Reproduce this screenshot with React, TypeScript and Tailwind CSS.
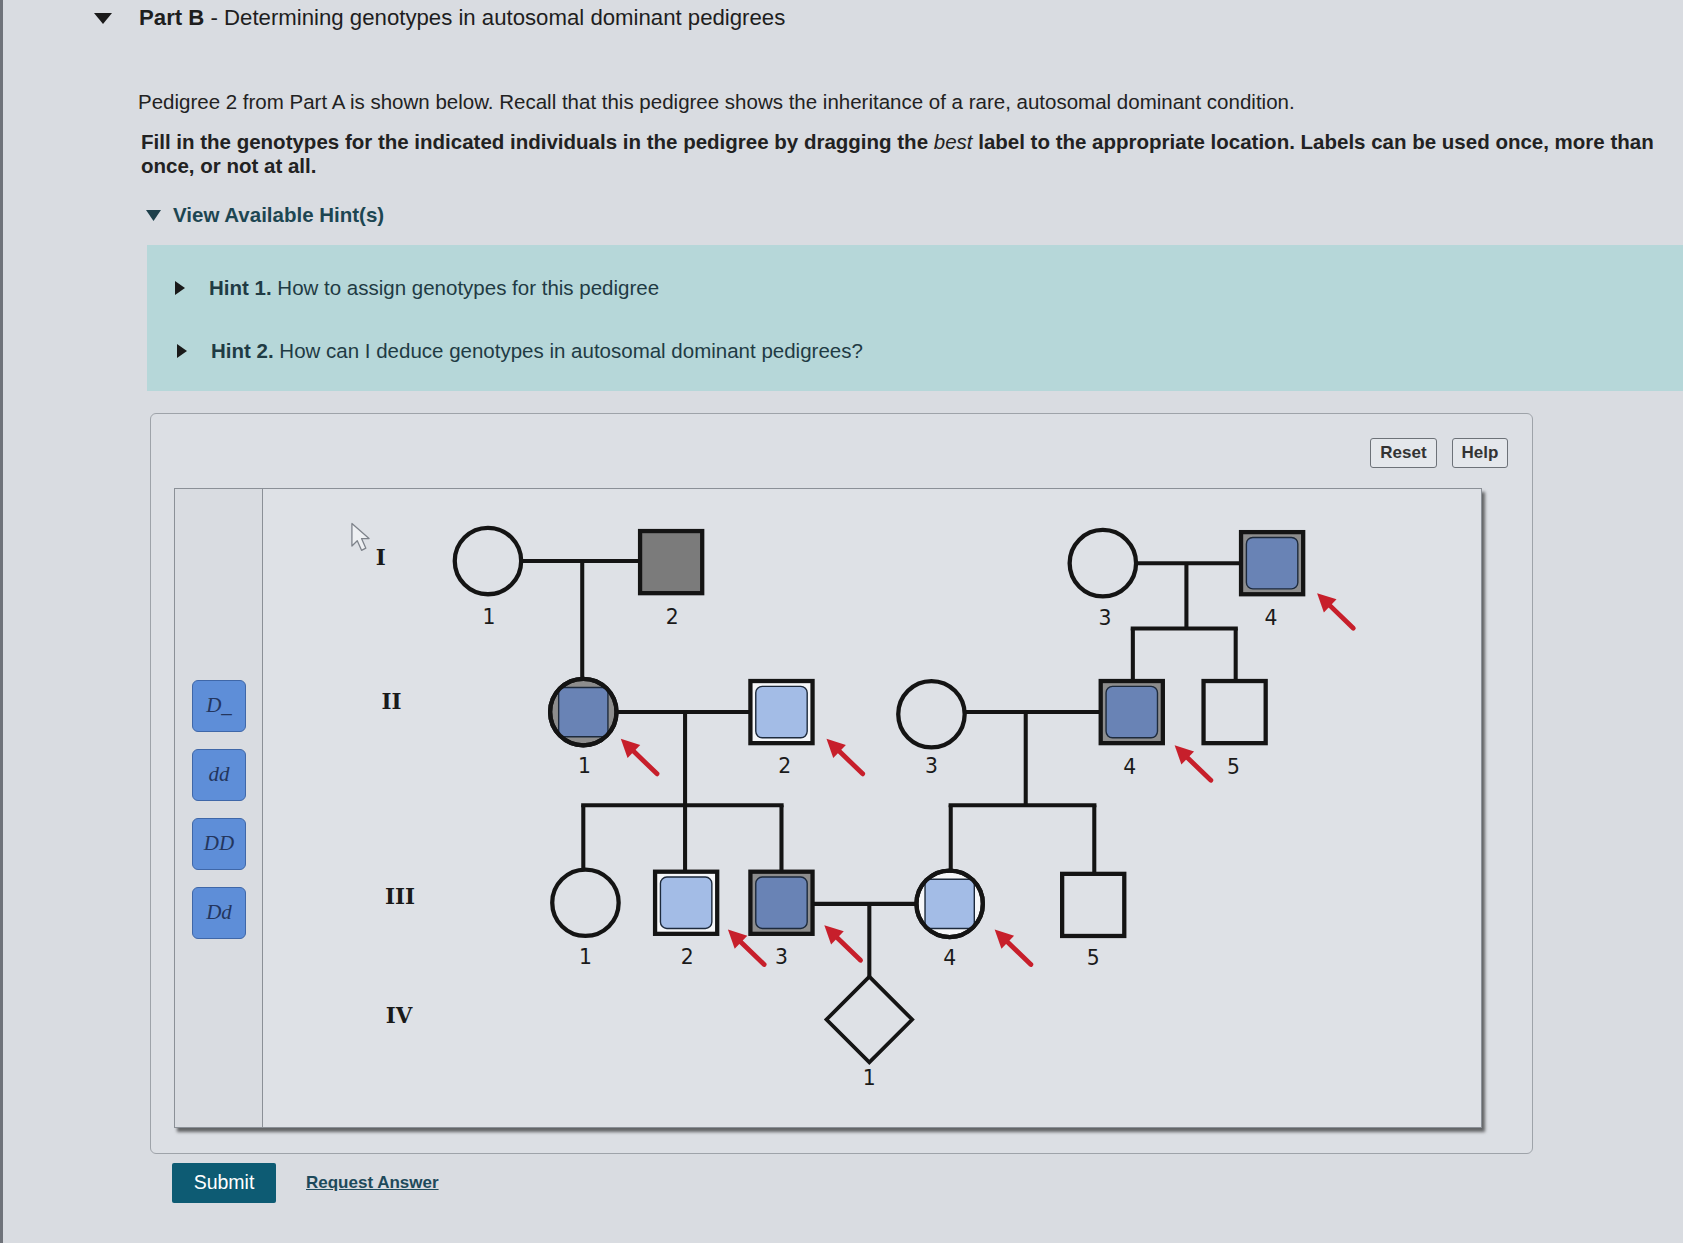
import React from 'react';

const INK = '#141414';
const RED = '#c71f2b';

type SqKind = 'plain' | 'gray' | 'dark' | 'light';

function Sq({ x, y, kind }: { x: number; y: number; kind: SqKind }) {
  const s = 58;
  const fill =
    kind === 'gray' ? '#7b7b7b' : kind === 'dark' ? '#8d8d8d' : kind === 'light' ? '#f6f7f9' : 'none';
  return (
    <g>
      <rect x={x} y={y} width={s} height={s} fill={fill} stroke={INK} strokeWidth={4} />
      {(kind === 'dark' || kind === 'light') && (
        <rect
          x={x + 5}
          y={y + 5}
          width={s - 10}
          height={s - 10}
          rx={6}
          fill={kind === 'dark' ? '#6983b5' : '#a3bce6'}
          stroke="#1d2a3c"
          strokeWidth={1.3}
        />
      )}
    </g>
  );
}

function Circ({ cx, cy, kind, id }: { cx: number; cy: number; kind: 'plain' | 'dark' | 'light'; id: string }) {
  const r = 31;
  const fill = kind === 'dark' ? '#8d8d8d' : kind === 'light' ? '#f6f7f9' : 'none';
  return (
    <g>
      <clipPath id={id}>
        <circle cx={cx} cy={cy} r={r - 1} />
      </clipPath>
      <circle cx={cx} cy={cy} r={r} fill={fill} stroke={INK} strokeWidth={4} />
      {kind !== 'plain' && (
        <rect
          x={cx - 23}
          y={cy - 23}
          width={46}
          height={46}
          rx={5}
          clipPath={`url(#${id})`}
          fill={kind === 'dark' ? '#6983b5' : '#a3bce6'}
          stroke="#1d2a3c"
          strokeWidth={1.3}
        />
      )}
      {kind !== 'plain' && <circle cx={cx} cy={cy} r={r} fill="none" stroke={INK} strokeWidth={4} />}
    </g>
  );
}

// head sits at (x, y), tail runs off to the lower right
function Arrow({ x, y }: { x: number; y: number }) {
  return (
    <g transform={`translate(${x} ${y}) rotate(44)`}>
      <line x1={12} y1={0} x2={47} y2={0} stroke={RED} strokeWidth={4.5} strokeLinecap="round" />
      <polygon points="0,0 17,-8.5 17,8.5" fill={RED} />
    </g>
  );
}

function Num({ x, y, n }: { x: number; y: number; n: string }) {
  return (
    <text
      x={x}
      y={y}
      textAnchor="middle"
      dominantBaseline="central"
      fontFamily="'DejaVu Sans', Verdana, sans-serif"
      fontSize={19}
      fill="#1a1a1a"
    >
      {n}
    </text>
  );
}

function Gen({ x, y, t }: { x: number; y: number; t: string }) {
  return (
    <text
      x={x}
      y={y}
      textAnchor="middle"
      dominantBaseline="central"
      fontFamily="'DejaVu Serif', 'Liberation Serif', serif"
      fontWeight={700}
      fontSize={20}
      fill="#1a1a1a"
    >
      {t}
    </text>
  );
}

function Pedigree() {
  const line = { stroke: INK, strokeWidth: 3.8 };
  return (
    <svg width={1219} height={639} viewBox="244 455 1137 596" className="block">
      {/* mouse pointer */}
      <path
        d="M327 487 L327 508 L332 503 L336 512 L340 510 L336 501 L343 501 Z"
        fill="#eef0f3"
        stroke="#7d828a"
        strokeWidth={1.2}
        strokeLinejoin="round"
      />

      <Gen x={354} y={519} t="I" />
      <Gen x={364} y={653} t="II" />
      <Gen x={372} y={835} t="III" />
      <Gen x={371} y={946} t="IV" />

      {/* generation I lines */}
      <line x1={485} y1={522} x2={596} y2={522} {...line} />
      <line x1={542} y1={522} x2={542} y2={632} {...line} />
      <line x1={1059} y1={524} x2={1157} y2={524} {...line} />
      <line x1={1106} y1={524} x2={1106} y2={585} {...line} />
      <line x1={1054} y1={585} x2={1154} y2={585} {...line} />
      <line x1={1056} y1={585} x2={1056} y2={634} {...line} />
      <line x1={1152} y1={585} x2={1152} y2={634} {...line} />

      {/* generation II lines */}
      <line x1={574} y1={663} x2={699} y2={663} {...line} />
      <line x1={638} y1={663} x2={638} y2={750} {...line} />
      <line x1={541} y1={750} x2={730} y2={750} {...line} />
      <line x1={543} y1={750} x2={543} y2={810} {...line} />
      <line x1={638} y1={750} x2={638} y2={812} {...line} />
      <line x1={728} y1={750} x2={728} y2={812} {...line} />
      <line x1={899} y1={663} x2={1026} y2={663} {...line} />
      <line x1={956} y1={663} x2={956} y2={750} {...line} />
      <line x1={884} y1={750} x2={1022} y2={750} {...line} />
      <line x1={886} y1={750} x2={886} y2={811} {...line} />
      <line x1={1020} y1={750} x2={1020} y2={814} {...line} />

      {/* generation III lines */}
      <line x1={757} y1={842} x2={854} y2={842} {...line} />
      <line x1={810} y1={842} x2={810} y2={910} {...line} />

      {/* generation I */}
      <Circ cx={454} cy={522} kind="plain" id="c11" />
      <Sq x={596} y={494} kind="gray" />
      <Circ cx={1028} cy={524} kind="plain" id="c13" />
      <Sq x={1157} y={495} kind="dark" />

      {/* generation II */}
      <Circ cx={543} cy={663} kind="dark" id="c21" />
      <Sq x={699} y={634} kind="light" />
      <Circ cx={868} cy={665} kind="plain" id="c23" />
      <Sq x={1026} y={634} kind="dark" />
      <Sq x={1122} y={634} kind="plain" />

      {/* generation III */}
      <Circ cx={545} cy={841} kind="plain" id="c31" />
      <Sq x={610} y={812} kind="light" />
      <Sq x={699} y={812} kind="dark" />
      <Circ cx={885} cy={842} kind="light" id="c34" />
      <Sq x={990} y={814} kind="plain" />

      {/* generation IV */}
      <polygon points="810,910 850,950 810,990 770,950" fill="none" stroke={INK} strokeWidth={3.5} />

      <Num x={455} y={574} n="1" />
      <Num x={626} y={574} n="2" />
      <Num x={1030} y={575} n="3" />
      <Num x={1185} y={575} n="4" />
      <Num x={544} y={713} n="1" />
      <Num x={731} y={713} n="2" />
      <Num x={868} y={713} n="3" />
      <Num x={1053} y={714} n="4" />
      <Num x={1150} y={714} n="5" />
      <Num x={545} y={892} n="1" />
      <Num x={640} y={892} n="2" />
      <Num x={728} y={892} n="3" />
      <Num x={885} y={893} n="4" />
      <Num x={1019} y={893} n="5" />
      <Num x={810} y={1005} n="1" />

      <Arrow x={578} y={688} />
      <Arrow x={770} y={688} />
      <Arrow x={1228} y={552} />
      <Arrow x={1095} y={694} />
      <Arrow x={678} y={866} />
      <Arrow x={768} y={862} />
      <Arrow x={927} y={866} />
    </svg>
  );
}

const labels = ['D_', 'dd', 'DD', 'Dd'];

export default function App() {
  return (
    <div className="relative w-[1683px] h-[1243px] overflow-hidden border-l-[3px] border-[#6f737a] bg-[#d9dce1] font-['Liberation_Sans',Arial,sans-serif] text-[#222]">
      {/* Part header */}
      <div className="flex items-center h-[26px] mt-[5px]">
        <svg className="ml-[91px] w-[18px] h-[11px]" viewBox="0 0 18 11">
          <polygon points="0,0 18,0 9,11" fill="#1a1a1a" />
        </svg>
        <h2 className="ml-[27px] text-[22.2px] leading-[26px] text-[#1e1e1e]">
          <span className="font-bold">Part B</span> - Determining genotypes in autosomal dominant pedigrees
        </h2>
      </div>

      <div className="pl-[135px] pr-[10px]">
        <p className="mt-[59px] text-[20.5px] leading-[24px]">
          Pedigree 2 from Part A is shown below. Recall that this pedigree shows the inheritance of a rare, autosomal
          dominant condition.
        </p>
        <p className="mt-[16px] ml-[3px] text-[20.5px] leading-[24px] font-bold">
          Fill in the genotypes for the indicated individuals in the pedigree by dragging the{' '}
          <em className="font-normal">best</em> label to the appropriate location. Labels can be used once, more than
          once, or not at all.
        </p>

        <div className="mt-[25px] flex items-center h-[24px]">
          <svg className="ml-[8px] w-[15px] h-[11px]" viewBox="0 0 15 11">
            <polygon points="0,0 15,0 7.5,11" fill="#1d3f4a" />
          </svg>
          <span className="ml-[12px] text-[20.5px] font-bold text-[#1d4652]">View Available Hint(s)</span>
        </div>

        {/* hints */}
        <div className="mt-[18px] ml-[9px] mr-[-10px] h-[146px] bg-[#b6d7d9] pt-[31px] text-[20.5px] text-[#1f3b44]">
          <div className="flex items-center h-[24px]">
            <svg className="ml-[28px] w-[10px] h-[14px]" viewBox="0 0 10 14">
              <polygon points="0,0 10,7 0,14" fill="#1a1a1a" />
            </svg>
            <span className="ml-[24px]">
              <span className="font-bold">Hint 1.</span> How to assign genotypes for this pedigree
            </span>
          </div>
          <div className="flex items-center h-[24px] mt-[39px]">
            <svg className="ml-[30px] w-[10px] h-[14px]" viewBox="0 0 10 14">
              <polygon points="0,0 10,7 0,14" fill="#1a1a1a" />
            </svg>
            <span className="ml-[24px]">
              <span className="font-bold">Hint 2.</span> How can I deduce genotypes in autosomal dominant pedigrees?
            </span>
          </div>
        </div>

        {/* drag-and-drop panel */}
        <div className="mt-[22px] ml-[12px] w-[1383px] h-[741px] rounded-[6px] border border-[#9ea3a9] bg-[#dcdfe4]">
          <div className="flex justify-end gap-[15px] pt-[24px] pr-[24px]">
            <button className="h-[30px] w-[67px] rounded-[3px] border border-[#6d7278] bg-[#e4e7eb] text-[17px] font-bold text-[#333]">
              Reset
            </button>
            <button className="h-[30px] w-[56px] rounded-[3px] border border-[#6d7278] bg-[#e4e7eb] text-[17px] font-bold text-[#333]">
              Help
            </button>
          </div>

          <div className="mt-[20px] ml-[23px] w-[1308px] h-[640px] flex border border-[#8b9097] bg-[#dee1e6] shadow-[3px_4px_3px_rgba(0,0,0,0.55)]">
            <div className="w-[88px] shrink-0 border-r border-[#8b9097] bg-[#d9dce1] flex flex-col gap-[17px] pl-[17px] pt-[191px]">
              {labels.map((l) => (
                <div
                  key={l}
                  className="w-[54px] h-[52px] rounded-[6px] border border-[#3f67a8] bg-[#5e8ed8] flex items-center justify-center font-['Liberation_Serif',serif] italic text-[21px] text-[#24365e]"
                >
                  {l}
                </div>
              ))}
            </div>
            <Pedigree />
          </div>
        </div>

        <div className="mt-[9px] ml-[34px] flex items-center">
          <button className="w-[104px] h-[40px] bg-[#0d5b73] text-white text-[19.5px] rounded-[2px]">Submit</button>
          <a className="ml-[30px] text-[17px] font-bold text-[#1e4a5b] underline">Request Answer</a>
        </div>
      </div>
    </div>
  );
}
